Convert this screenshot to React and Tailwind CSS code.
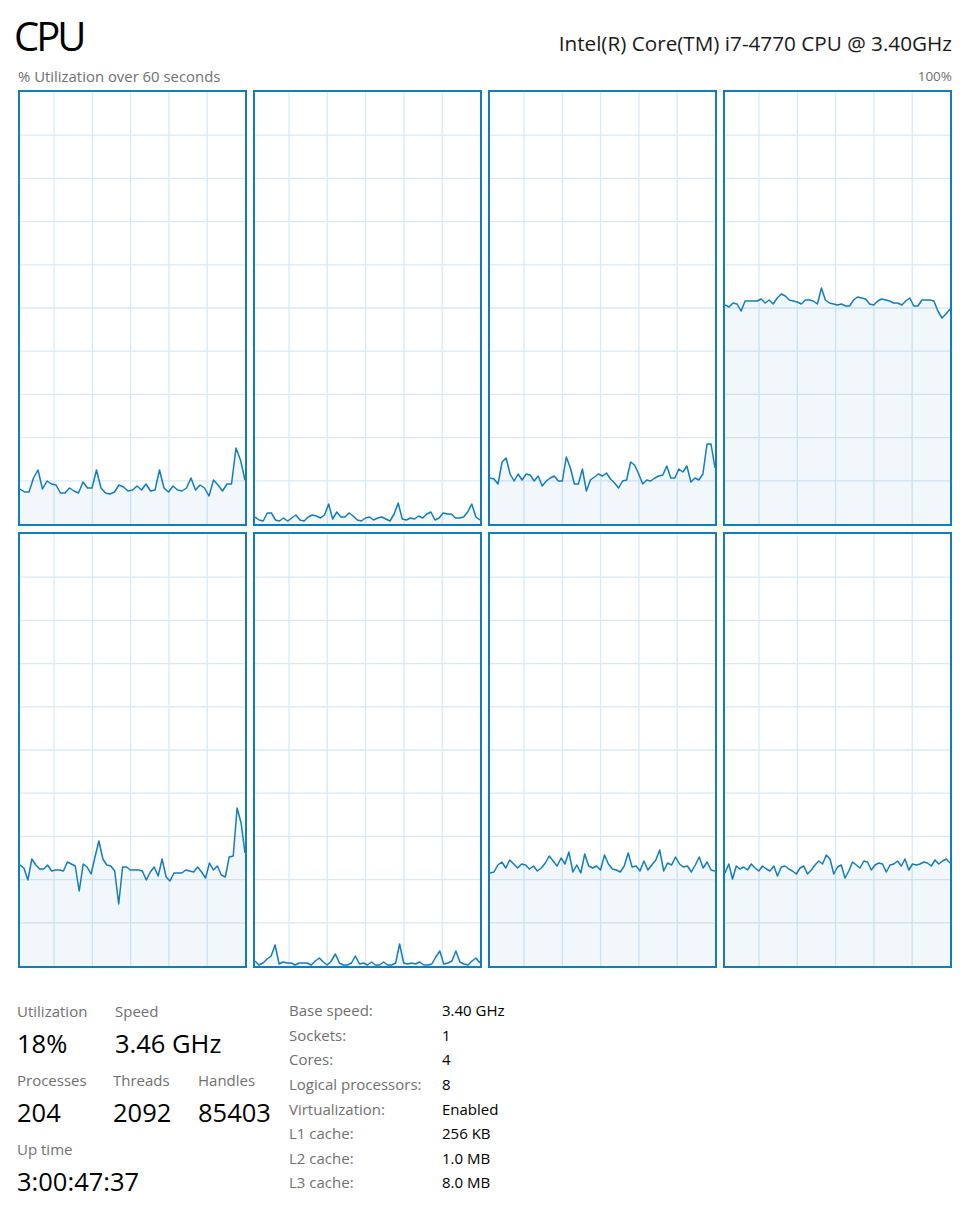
import React from "react";

const FONT = "font-['Open_Sans','Noto_Sans',sans-serif]";

// y positions (px from top of each graph box) sampled left to right
const graphs = [
  [399,402,402,388,380,399,391,394,395,403,403,398,401,403,392,398,398,380,398,403,404,402,395,397,401,400,396,400,394,401,400,380,398,402,396,400,401,398,388,400,395,398,406,390,395,401,394,394,358,370,390],
  [427,430,431,423,423,430,431,428,431,428,425,430,431,427,425,426,428,425,414,429,422,427,427,423,426,430,431,428,427,430,428,427,429,431,424,413,429,430,428,429,426,428,424,422,430,428,423,424,424,428,428,427,422,414,427,430],
  [388,389,394,372,368,384,391,384,390,384,385,391,386,396,391,388,386,391,391,367,378,394,394,379,401,390,387,384,386,383,389,393,398,391,390,372,375,384,394,390,391,388,386,385,376,388,388,379,382,376,392,388,390,384,354,354,378],
  [215,217,213,214,221,211,211,211,211,209,213,210,214,208,204,206,210,211,212,214,210,210,211,214,198,210,213,214,215,214,216,216,210,207,208,209,214,215,211,209,210,211,213,213,215,211,208,216,216,210,210,210,211,221,228,224,219],
  [333,336,348,327,333,337,337,333,339,338,338,339,330,332,334,359,332,335,342,325,309,327,333,334,339,372,335,335,338,338,338,339,348,340,335,344,327,345,349,341,341,341,338,339,340,335,340,346,331,338,334,343,345,325,324,276,291,321],
  [429,433,431,427,424,413,432,430,431,431,433,431,431,431,433,429,426,430,433,429,422,431,433,433,431,424,432,431,433,430,433,433,430,433,433,431,412,431,432,431,432,430,433,433,432,425,419,432,431,429,419,430,432,433,429,426,431],
  [341,340,333,330,336,328,332,336,332,333,337,334,339,336,331,324,329,334,326,332,320,340,333,341,322,334,336,334,338,323,332,337,338,340,334,321,335,334,339,329,338,333,328,318,339,331,333,325,332,335,334,340,333,325,336,330,338,339],
  [341,332,347,334,337,335,338,332,336,339,334,337,339,334,344,335,334,337,339,342,336,334,342,338,333,329,332,323,327,342,335,333,346,339,330,333,336,329,330,338,333,331,332,340,333,332,329,334,327,338,332,333,332,330,331,334,328,332,329,327,331],
];

const W = 225;
const H = 432;

function CoreGraph({ data }) {
  const pts = data.map((y, i) => `${((i * W) / (data.length - 1)).toFixed(1)},${y - 2}`);
  const vLines = [34, 72.3, 110.6, 148.9, 187.2];
  const hLines = [1, 2, 3, 4, 5, 6, 7, 8, 9].map((k) => (k * H) / 10);

  return (
    <div className="border-2 border-[#117dbb] bg-white">
      <svg className="block w-full h-full" viewBox={`0 0 ${W} ${H}`} preserveAspectRatio="none">
        {vLines.map((x) => (
          <line key={"v" + x} x1={x} y1="0" x2={x} y2={H} stroke="#d9eaf4" strokeWidth="1.3" />
        ))}
        {hLines.map((y) => (
          <line key={"h" + y} x1="0" y1={y} x2={W} y2={y} stroke="#d9eaf4" strokeWidth="1.3" />
        ))}
        <polygon points={`0,${H} ${pts.join(" ")} ${W},${H}`} fill="#117dbb" fillOpacity="0.06" />
        <polyline points={pts.join(" ")} fill="none" stroke="#117dbb" strokeWidth="1.5" strokeLinejoin="round" />
      </svg>
    </div>
  );
}

function Stat({ label, value }) {
  return (
    <div>
      <div className="text-[15px] leading-[20px] text-[#707070]">{label}</div>
      <div className="text-[25.5px] leading-[30px] mt-[7px] text-black">{value}</div>
    </div>
  );
}

const details = [
  ["Base speed:", "3.40 GHz"],
  ["Sockets:", "1"],
  ["Cores:", "4"],
  ["Logical processors:", "8"],
  ["Virtualization:", "Enabled"],
  ["L1 cache:", "256 KB"],
  ["L2 cache:", "1.0 MB"],
  ["L3 cache:", "8.0 MB"],
];

export default function App() {
  return (
    <div className={`w-[975px] h-[1211px] bg-white overflow-hidden ${FONT}`}>
      <div className="w-[934px] ml-[18px] pt-[15px]">
        {/* Header */}
        <div className="flex items-baseline justify-between">
          <h1 className="text-[40px] leading-[42px] tracking-[-3px] text-black -ml-[4px]">CPU</h1>
          <div className="text-[20.7px] leading-[24px] text-[#1a1a1a]">
            Intel(R) Core(TM) i7-4770 CPU @ 3.40GHz
          </div>
        </div>

        <div className="flex justify-between mt-[11px] text-[14.9px] leading-[16px] text-[#707070]">
          <span>% Utilization over 60 seconds</span>
          <span className="text-[13.5px]">100%</span>
        </div>

        {/* Logical processor graphs */}
        <div className="grid grid-cols-4 grid-rows-[436px_436px] gap-[6px] mt-[6px]">
          {graphs.map((g, i) => (
            <CoreGraph key={i} data={g} />
          ))}
        </div>

        {/* Stats */}
        <div className="flex mt-[33px]">
          <div className="w-[272px] -ml-[1px] flex flex-col gap-[12px]">
            <div className="flex">
              <div className="w-[98px]"><Stat label="Utilization" value="18%" /></div>
              <Stat label="Speed" value="3.46 GHz" />
            </div>
            <div className="flex">
              <div className="w-[96px]"><Stat label="Processes" value="204" /></div>
              <div className="w-[85px]"><Stat label="Threads" value="2092" /></div>
              <Stat label="Handles" value="85403" />
            </div>
            <Stat label="Up time" value="3:00:47:37" />
          </div>

          <div className="grid grid-cols-[153px_auto] text-[15px] leading-[23.8px] -mt-[2px]">
            {details.map(([k, v]) => (
              <React.Fragment key={k}>
                <div className="text-[#707070]">{k}</div>
                <div className="text-black">{v}</div>
              </React.Fragment>
            ))}
          </div>
        </div>
      </div>
    </div>
  );
}
